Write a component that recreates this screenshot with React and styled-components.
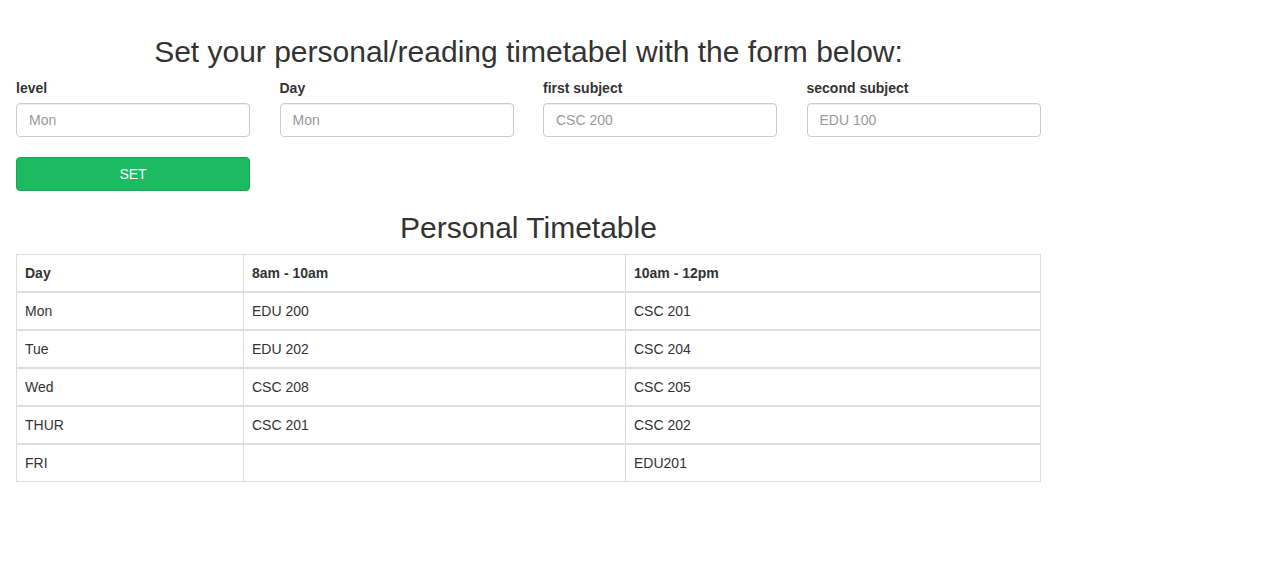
import React from "react";
import styled, { createGlobalStyle } from "styled-components";

const GlobalStyle = createGlobalStyle`
  * { box-sizing: border-box; }
  body {
    margin: 0;
    background: #fff;
    font-family: "Liberation Sans", Arial, Helvetica, sans-serif;
    font-size: 14px;
    line-height: 1.42857;
    color: #333;
  }
`;

const fields = [
  { label: "level", placeholder: "Mon" },
  { label: "Day", placeholder: "Mon" },
  { label: "first subject", placeholder: "CSC 200" },
  { label: "second subject", placeholder: "EDU 100" },
];

const rows = [
  ["Mon", "EDU 200", "CSC 201"],
  ["Tue", "EDU 202", "CSC 204"],
  ["Wed", "CSC 208", "CSC 205"],
  ["THUR", "CSC 201", "CSC 202"],
  ["FRI", "", "EDU201"],
];

const App = () => {
  return (
    <Page>
      <GlobalStyle />
      <Heading $top={35}>Set your personal/reading timetabel with the form below:</Heading>
      <FormRow>
        {fields.map((f) => (
          <FormGroup key={f.label}>
            <Label>{f.label}</Label>
            <Input type="text" placeholder={f.placeholder} />
          </FormGroup>
        ))}
      </FormRow>
      <FormRow>
        <SetButton type="button">SET</SetButton>
      </FormRow>
      <Heading $top={20}>Personal Timetable</Heading>
      <Table>
        <colgroup>
          <col style={{ width: 227 }} />
          <col style={{ width: 382 }} />
          <col />
        </colgroup>
        <thead>
          <tr>
            <Th>Day</Th>
            <Th>8am - 10am</Th>
            <Th>10am - 12pm</Th>
          </tr>
        </thead>
        <tbody>
          {rows.map((r) => (
            <tr key={r[0]}>
              {r.map((c, i) => (
                <Td key={i}>{c}</Td>
              ))}
            </tr>
          ))}
        </tbody>
      </Table>
    </Page>
  );
};

export default App;

// Styled Components
const Page = styled.div`
  width: 1057px;
  padding: 0 16px;
`;

const Heading = styled.h2`
  margin: ${(p) => p.$top}px 0 10px;
  font-size: 30px;
  font-weight: 500;
  line-height: 33px;
  text-align: center;
  color: #333;
`;

const FormRow = styled.div`
  display: grid;
  grid-template-columns: repeat(4, 234px);
  column-gap: 29.5px;
`;

const FormGroup = styled.div`
  margin-bottom: 20px;
`;

const Label = styled.label`
  display: block;
  margin-bottom: 5px;
  font-weight: bold;
  line-height: 20px;
`;

const Input = styled.input`
  display: block;
  width: 100%;
  height: 34px;
  padding: 6px 12px;
  font-family: inherit;
  font-size: 14px;
  color: #555;
  background: #fff;
  border: 1px solid #ccc;
  border-radius: 4px;
  box-shadow: inset 0 1px 1px rgba(0, 0, 0, 0.075);
  &::placeholder {
    color: #999;
  }
`;

const SetButton = styled.button`
  height: 34px;
  width: 234px;
  padding: 6px 12px;
  font-family: inherit;
  font-size: 14px;
  color: #fff;
  background: #1dbb61;
  border: 1px solid #17a553;
  border-radius: 4px;
  cursor: pointer;
`;

const Table = styled.table`
  width: 1025px;
  border-collapse: collapse;
  border: 1px solid #ddd;
  table-layout: fixed;
`;

const Th = styled.th`
  text-align: left;
  padding: 8px;
  line-height: 20px;
  font-weight: bold;
  border: 1px solid #ddd;
  border-bottom-width: 2px;
`;

const Td = styled.td`
  padding: 8px;
  line-height: 20px;
  border: 1px solid #ddd;
  border-bottom-width: 2px;
  tr:last-child > & {
    border-bottom-width: 1px;
  }
`;
